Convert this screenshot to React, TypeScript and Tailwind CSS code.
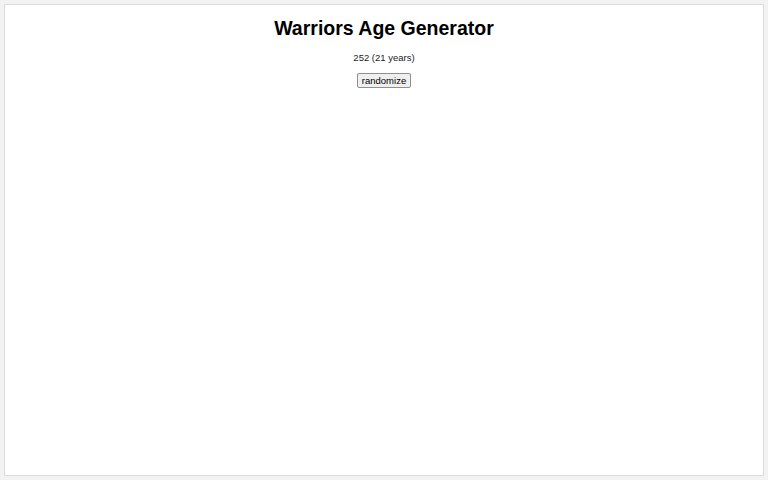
export default function App() {
  return (
    <div className="h-screen w-full bg-[#f2f2f2] p-[4px]" style={{ fontFamily: '"Liberation Sans", Arial, sans-serif' }}>
      <div className="flex h-full flex-col items-center border border-[#dcdcdc] bg-white">
        <h1 className="mt-[11px] text-[19.5px] font-bold leading-[24px] text-black">Warriors Age Generator</h1>
        <p className="mt-[12px] text-[9.5px] leading-[12px] text-[#222]">252 (21 years)</p>
        <button className="mt-[9px] rounded-[2px] border border-[#8f8f8f] bg-[#efefef] px-[4px] text-[9.5px] leading-[13px] text-black">
          randomize
        </button>
      </div>
    </div>
  );
}
